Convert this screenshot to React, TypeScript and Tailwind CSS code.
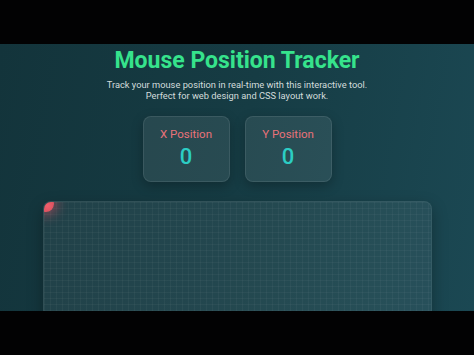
import React from "react";

export default function App() {
  return (
    <div className="w-[474px] h-[355px] bg-black flex flex-col overflow-hidden" style={{ fontFamily: "Roboto, 'Liberation Sans', sans-serif" }}>
      <div className="h-[44px] shrink-0 bg-[#020203]" />
      <div className="h-[267px] shrink-0 overflow-hidden bg-[linear-gradient(100deg,#13343b_0%,#163c44_50%,#1b4853_100%)] flex flex-col items-center">
        <h1 className="mt-[3px] text-[23px] leading-[28px] font-bold text-[#36e38c]">Mouse Position Tracker</h1>
        <p className="mt-[4px] text-[9.3px] leading-[11px] text-[#d3dcdc] text-center">
          Track your mouse position in real-time with this interactive tool.
          <br />
          Perfect for web design and CSS layout work.
        </p>
        <div className="mt-[15px] flex gap-[15px]">
          {[
            ["X Position", "0"],
            ["Y Position", "0"],
          ].map(([label, val]) => (
            <div
              key={label}
              className="w-[87px] h-[66px] rounded-[8px] bg-[rgba(255,255,255,0.08)] border border-[rgba(255,255,255,0.09)] shadow-[0_4px_12px_rgba(0,0,0,0.25)] flex flex-col items-center pt-[10px]"
            >
              <div className="text-[11.5px] leading-[14px] text-[#e9727a]">{label}</div>
              <div className="mt-[3px] text-[22px] leading-[26px] font-medium text-[#2ccdc4]">{val}</div>
            </div>
          ))}
        </div>
        <div className="mt-[19px] self-start ml-[43px] relative w-[389px] h-[140px] shrink-0 rounded-[8px] overflow-hidden bg-[rgba(255,255,255,0.06)] border border-[rgba(255,255,255,0.07)] shadow-[0_6px_16px_rgba(0,0,0,0.3)]">
          <div className="absolute inset-0 bg-[linear-gradient(rgba(255,255,255,0.035)_1px,transparent_1px),linear-gradient(90deg,rgba(255,255,255,0.035)_1px,transparent_1px)] bg-[size:6px_6px]" />
          <div className="absolute -left-[6px] -top-[6px] w-[16px] h-[16px] rounded-full bg-[radial-gradient(circle_at_60%_60%,#ee5f6c,#c84553)] shadow-[0_0_12px_4px_rgba(230,80,100,0.45)]" />
        </div>
      </div>
      <div className="flex-1 bg-[#020203]" />
    </div>
  );
}
